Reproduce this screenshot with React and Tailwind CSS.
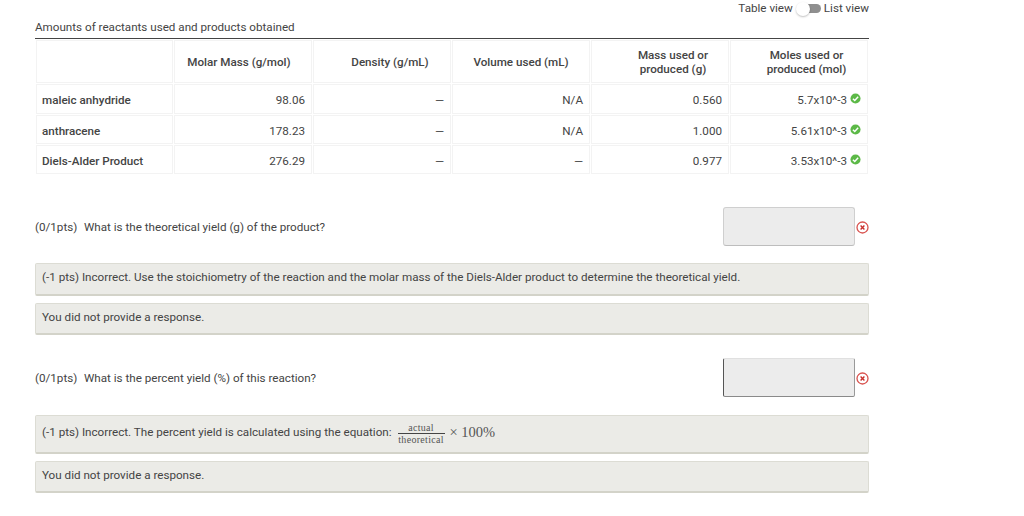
import React from 'react';

const FONT = "font-['Roboto',sans-serif]";

const rows = [
  { name: 'maleic anhydride', mass: '98.06', density: '—', volume: 'N/A', used: '0.560', moles: '5.7x10^-3', h: 'h-[30px] [&>td]:pt-[1px]' },
  { name: 'anthracene', mass: '178.23', density: '—', volume: 'N/A', used: '1.000', moles: '5.61x10^-3', h: 'h-[29px] [&>td]:pt-[3px]' },
  { name: 'Diels-Alder Product', mass: '276.29', density: '—', volume: '—', used: '0.977', moles: '3.53x10^-3', h: 'h-[29px] [&>td]:pt-[3px]' },
];

const cell = 'border border-[#f3f3f3] p-0';
const num = 'border border-[#f3f3f3] pb-0 pl-0 pr-[6px] text-right';

function Check() {
  return (
    <svg width="11" height="11" viewBox="0 0 12 12" className="absolute left-[calc(100%+3px)] top-0">
      <circle cx="6" cy="6" r="5.5" fill="#5cb947" />
      <path d="M3.2 6.2 5.2 8.2 8.9 4.2" fill="none" stroke="#fff" strokeWidth="1.6" />
    </svg>
  );
}

function Cross() {
  return (
    <svg width="13" height="13" viewBox="0 0 13 13" className="flex-none">
      <circle cx="6.5" cy="6.5" r="5.5" fill="none" stroke="#d9534f" strokeWidth="1.3" />
      <path d="M4.6 4.6 8.4 8.4M8.4 4.6 4.6 8.4" fill="none" stroke="#c9302c" strokeWidth="1.4" />
    </svg>
  );
}

function Note({ className = '', children }) {
  return (
    <div className={`flex items-center rounded-[2px] border border-[#dcdcd4] border-b-2 border-b-[#d3d3c9] bg-[#ebebe7] pl-[6px] text-[#444] ${className}`}>
      {children}
    </div>
  );
}

function Question({ pts, text, focused, className = '' }) {
  return (
    <div className={`flex h-[39px] items-center text-[#444] ${className}`}>
      <p className="flex w-[689px] pt-[2px]">
        <span className="w-[49px]">{pts}</span>
        <span>{text}</span>
      </p>
      <div
        className={
          focused
            ? 'h-[39px] w-[132px] rounded-[2px] border border-[#e0e0e0] border-b-[#8a8a8a] border-l-[#555] border-r-[#999] bg-[#ececec]'
            : 'h-[39px] w-[132px] rounded-[3px] border border-[#cfcfcf] border-b-[#bdbdbd] bg-[#ececec]'
        }
      />
      <span className="ml-[1px] flex pt-[2px]"><Cross /></span>
    </div>
  );
}

export default function App() {
  return (
    <div className={`h-[516px] w-[1024px] overflow-hidden bg-white pl-[35px] text-[11.65px] ${FONT}`}>
      <div className="w-[834px]">
        <div className="flex h-[17px] items-center justify-end text-[#444]">
          <span>Table view</span>
          <span className="relative ml-[3px] mr-[3px] h-[11px] w-[25px]">
            <span className="absolute left-[6px] top-[1px] h-[9px] w-[19px] rounded-full bg-[#8f8f8f]" />
            <span className="absolute left-0 top-[-1px] h-[14px] w-[14px] rounded-full bg-white shadow-[0_1px_2px_rgba(0,0,0,0.25)]" />
          </span>
          <span>List view</span>
        </div>

        <div className="mt-[4px] h-[18px] border-b border-[#444] leading-[13px] text-[#444]">
          Amounts of reactants used and products obtained
        </div>

        <table className="w-full table-fixed border-separate border-spacing-x-[1px] border-spacing-y-[1px] leading-[14px] text-[#444]">
          <thead>
            <tr className="h-[43px]">
              <th className={`${cell} w-[137px]`} />
              <th className={`${cell} pr-[8px]`}><span className="font-medium">Molar Mass (g/mol)</span></th>
              <th className={`${cell} pl-[16px]`}><span className="font-medium">Density (g/mL)</span></th>
              <th className={cell}><span className="font-medium">Volume used (mL)</span></th>
              <th className={`${cell} pl-[26px]`}><span className="font-medium">Mass used or<br />produced (g)</span></th>
              <th className={`${cell} pl-[15px]`}><span className="font-medium">Moles used or<br />produced (mol)</span></th>
            </tr>
          </thead>
          <tbody>
            {rows.map((r) => (
              <tr key={r.name} className={r.h}>
                <td className="border border-[#f3f3f3] pb-0 pl-[5px] pr-0 font-medium">{r.name}</td>
                <td className={num}>{r.mass}</td>
                <td className={num}>{r.density}</td>
                <td className={num}>{r.volume}</td>
                <td className={num}>{r.used}</td>
                <td className="border border-[#f3f3f3] pb-0 pl-0 pr-[20px] text-right">
                  <span className="relative inline-block">{r.moles}<Check /></span>
                </td>
              </tr>
            ))}
          </tbody>
        </table>

        <Question className="mt-[32px]" pts="(0/1pts)" text="What is the theoretical yield (g) of the product?" />
        <Note className="mt-[17px] h-[33px] pb-[3px]">
          (-1 pts) Incorrect. Use the stoichiometry of the reaction and the molar mass of the Diels-Alder product to determine the theoretical yield.
        </Note>
        <Note className="mt-[7px] h-[32px] pb-[1px]">You did not provide a response.</Note>

        <Question className="mt-[23px]" focused pts="(0/1pts)" text="What is the percent yield (%) of this reaction?" />
        <Note className="mt-[18px] h-[39px] pb-[3px]">
          <span>(-1 pts) Incorrect. The percent yield is calculated using the equation:</span>
          <span className="ml-[6px] inline-flex w-[47px] flex-col items-center font-['Liberation_Serif',serif] text-[10px] leading-[11px] tracking-[0.3px] text-[#555]">
            <span className="w-full border-b border-[#444] text-center">actual</span>
            <span className="h-[9px] overflow-hidden text-center">theoretical</span>
          </span>
          <span className="ml-[5px] font-['Liberation_Serif',serif] text-[14.5px] text-[#555]">× 100%</span>
        </Note>
        <Note className="mt-[7px] h-[32px] pb-[1px]">You did not provide a response.</Note>
      </div>
    </div>
  );
}
